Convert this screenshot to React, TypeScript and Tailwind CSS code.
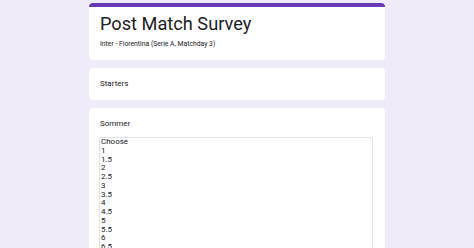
import React from "react";

const options = ["Choose", "1", "1.5", "2", "2.5", "3", "3.5", "4", "4.5", "5", "5.5", "6", "6.5", "7", "7.5", "8"];

export default function App() {
  return (
    <div className="w-[474px] h-[248px] overflow-hidden bg-[#f0ebf8] flex justify-center" style={{ fontFamily: "Roboto, 'Open Sans', sans-serif" }}>
      <div className="w-[296px] pt-[3px] flex flex-col gap-[8px]">
        <div className="shrink-0 bg-white rounded-[4px] overflow-hidden">
          <div className="h-[4px] bg-[#673ab7]" />
          <div className="px-[11px] pt-[5px] pb-[11px]">
            <div className="text-[18.2px] leading-[24px] text-[#202124]">Post Match Survey</div>
            <div className="mt-[3px] text-[6.8px] leading-[10px] text-[#202124]">Inter - Fiorentina (Serie A, Matchday 3)</div>
          </div>
        </div>
        <div className="shrink-0 bg-white rounded-[4px] px-[11px] py-[11px]">
          <div className="text-[8px] leading-[10px] text-[#202124]">Starters</div>
        </div>
        <div className="shrink-0 bg-white rounded-[4px] px-[10px] pt-[11px]">
          <div className="pl-[1px] text-[8px] leading-[10px] text-[#202124]">Sommer</div>
          <div className="mt-[8px] mr-[2px] border border-[#e3e3e3] rounded-[2px] pl-[1px]">
            {options.map((o) => (
              <div key={o} className="text-[8px] leading-[8.75px] text-[#202124]">{o}</div>
            ))}
          </div>
        </div>
      </div>
    </div>
  );
}
